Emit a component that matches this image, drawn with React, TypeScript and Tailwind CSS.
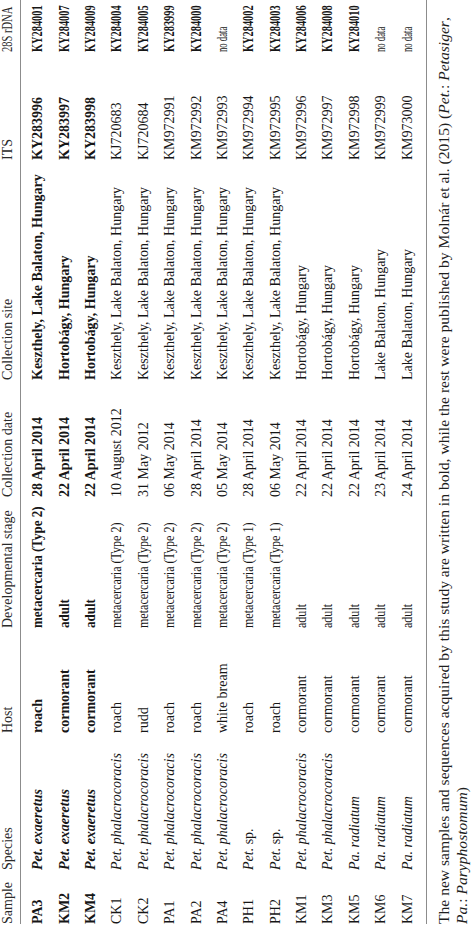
import type { ReactNode } from "react";

type Row = {
  sample: string;
  genus: string;
  species: string;
  host: string;
  stage: string;
  date: string;
  site: string;
  its: string;
  rdna: string;
  isNew?: boolean;
};

const rows: Row[] = [
  { sample: "PA3", genus: "Pet.", species: "exaeretus", host: "roach", stage: "metacercaria (Type 2)", date: "28 April 2014", site: "Keszthely, Lake Balaton, Hungary", its: "KY283996", rdna: "KY284001", isNew: true },
  { sample: "KM2", genus: "Pet.", species: "exaeretus", host: "cormorant", stage: "adult", date: "22 April 2014", site: "Hortobágy, Hungary", its: "KY283997", rdna: "KY284007", isNew: true },
  { sample: "KM4", genus: "Pet.", species: "exaeretus", host: "cormorant", stage: "adult", date: "22 April 2014", site: "Hortobágy, Hungary", its: "KY283998", rdna: "KY284009", isNew: true },
  { sample: "CK1", genus: "Pet.", species: "phalacrocoracis", host: "roach", stage: "metacercaria (Type 2)", date: "10 August 2012", site: "Keszthely, Lake Balaton, Hungary", its: "KJ720683", rdna: "KY284004" },
  { sample: "CK2", genus: "Pet.", species: "phalacrocoracis", host: "rudd", stage: "metacercaria (Type 2)", date: "31 May 2012", site: "Keszthely, Lake Balaton, Hungary", its: "KJ720684", rdna: "KY284005" },
  { sample: "PA1", genus: "Pet.", species: "phalacrocoracis", host: "roach", stage: "metacercaria (Type 2)", date: "06 May 2014", site: "Keszthely, Lake Balaton, Hungary", its: "KM972991", rdna: "KY283999" },
  { sample: "PA2", genus: "Pet.", species: "phalacrocoracis", host: "roach", stage: "metacercaria (Type 2)", date: "28 April 2014", site: "Keszthely, Lake Balaton, Hungary", its: "KM972992", rdna: "KY284000" },
  { sample: "PA4", genus: "Pet.", species: "phalacrocoracis", host: "white bream", stage: "metacercaria (Type 2)", date: "05 May 2014", site: "Keszthely, Lake Balaton, Hungary", its: "KM972993", rdna: "no data" },
  { sample: "PH1", genus: "Pet.", species: "sp.", host: "roach", stage: "metacercaria (Type 1)", date: "28 April 2014", site: "Keszthely, Lake Balaton, Hungary", its: "KM972994", rdna: "KY284002" },
  { sample: "PH2", genus: "Pet.", species: "sp.", host: "roach", stage: "metacercaria (Type 1)", date: "06 May 2014", site: "Keszthely, Lake Balaton, Hungary", its: "KM972995", rdna: "KY284003" },
  { sample: "KM1", genus: "Pet.", species: "phalacrocoracis", host: "cormorant", stage: "adult", date: "22 April 2014", site: "Hortobágy, Hungary", its: "KM972996", rdna: "KY284006" },
  { sample: "KM3", genus: "Pet.", species: "phalacrocoracis", host: "cormorant", stage: "adult", date: "22 April 2014", site: "Hortobágy, Hungary", its: "KM972997", rdna: "KY284008" },
  { sample: "KM5", genus: "Pa.", species: "radiatum", host: "cormorant", stage: "adult", date: "22 April 2014", site: "Hortobágy, Hungary", its: "KM972998", rdna: "KY284010" },
  { sample: "KM6", genus: "Pa.", species: "radiatum", host: "cormorant", stage: "adult", date: "23 April 2014", site: "Lake Balaton, Hungary", its: "KM972999", rdna: "no data" },
  { sample: "KM7", genus: "Pa.", species: "radiatum", host: "cormorant", stage: "adult", date: "24 April 2014", site: "Lake Balaton, Hungary", its: "KM973000", rdna: "no data" },
];

const headers = ["Sample", "Species", "Host", "Developmental stage", "Collection date", "Collection site", "ITS"];

const cols = "grid grid-cols-[54px_137px_105px_131px_117px_220px_108px_1fr]";

function Cell({ children, bold }: { children: ReactNode; bold?: boolean }) {
  return <div className={bold ? "whitespace-nowrap font-bold" : "whitespace-nowrap"}>{children}</div>;
}

// the last column is set tighter in the print
function Squeezed({ children, bold }: { children: ReactNode; bold?: boolean }) {
  return (
    <div className="whitespace-nowrap">
      <span className={bold ? "inline-block origin-left scale-x-[0.74] font-bold" : "inline-block origin-left scale-x-[0.62]"}>
        {children}
      </span>
    </div>
  );
}

export default function App() {
  return (
    <div className="h-[925px] w-[474px] overflow-hidden bg-white">
      {/* the page is printed sideways: lay it out flat, then turn it */}
      <div
        className="h-[474px] w-[925px] origin-top-left translate-y-[925px] -rotate-90 pl-px text-[14px] text-[#161616]"
        style={{ fontFamily: '"Liberation Serif", "Times New Roman", serif' }}
      >
        <div className={`${cols} h-[21px] items-start border-b border-[#8c8c8c] leading-[15px] text-[#2a2a2a]`}>
          {headers.map((h) => (
            <div key={h} className="whitespace-nowrap">
              {h}
            </div>
          ))}
          <div className="whitespace-nowrap">
            <span className="inline-block origin-left scale-x-[0.75]">28S rDNA</span>
          </div>
        </div>

        <div className="border-b border-[#8c8c8c] pt-[4px] pb-[5px]">
          {rows.map((r) => (
            <div key={r.sample} className={`${cols} h-[26.4px] items-center leading-[16px]`}>
              <Cell bold={r.isNew}>{r.sample}</Cell>
              <Cell bold={r.isNew}>
                <i>{r.genus}</i> {r.species === "sp." ? r.species : <i>{r.species}</i>}
              </Cell>
              <Cell bold={r.isNew}>{r.host}</Cell>
              <div className="whitespace-nowrap">
                <span
                  className={
                    r.isNew
                      ? "inline-block origin-left scale-x-[0.93] font-bold"
                      : "inline-block origin-left scale-x-[0.86]"
                  }
                >
                  {r.stage}
                </span>
              </div>
              <Cell bold={r.isNew}>{r.date}</Cell>
              <Cell bold={r.isNew}>{r.site}</Cell>
              <Cell bold={r.isNew}>{r.its}</Cell>
              <Squeezed bold={r.rdna !== "no data"}>{r.rdna}</Squeezed>
            </div>
          ))}
        </div>

        <p className="mt-[8px] whitespace-nowrap text-[15.6px] leading-[18px] text-[#1e1e1e]">
          The new samples and sequences acquired by this study are written in bold, while the rest were published by
          Molnár et al. (2015) (<i>Pet.</i>: <i>Petasiger</i>,
          <br />
          <i>Pa.</i>: <i>Paryphostomum</i>)
        </p>
      </div>
    </div>
  );
}
